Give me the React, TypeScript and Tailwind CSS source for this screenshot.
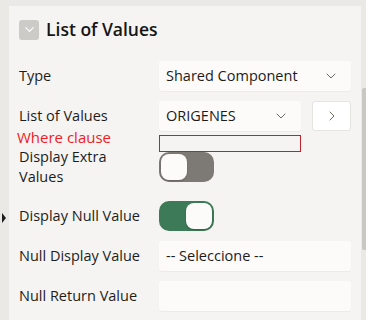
import { ChevronDown, ChevronRight } from 'lucide-react';

const font = { fontFamily: '"Open Sans", "Noto Sans", sans-serif' };

function Label({ children, className = '' }: { children: React.ReactNode; className?: string }) {
  return <div className={`w-[140px] shrink-0 text-[14.5px] leading-[20px] text-[#1d1c1b] ${className}`}>{children}</div>;
}

function Select({ value, className = '' }: { value: string; className?: string }) {
  return (
    <div className={`h-[30px] flex items-center justify-between pl-[7px] pr-[12px] rounded-[3px] bg-[#fcfbfa] shadow-[0_1px_1px_rgba(0,0,0,0.04)] ${className}`}>
      <span className="text-[14.5px] text-[#1d1c1b]">{value}</span>
      <ChevronDown size={16} strokeWidth={1.3} className="text-[#55524f]" />
    </div>
  );
}

function Toggle({ on }: { on: boolean }) {
  return (
    <div
      className={`w-[55px] h-[30px] rounded-[10px] p-[2px] flex ${on ? 'bg-[#3d7a57] justify-end' : 'bg-[#7d7975] justify-start'}`}
    >
      <div className="w-[26px] h-[26px] rounded-[8px] bg-[#fcfbfa] shadow-[0_1px_2px_rgba(0,0,0,0.2)]" />
    </div>
  );
}

export default function App() {
  return (
    <div className="w-[366px] h-[320px] overflow-hidden bg-[#ebe9e6] flex" style={font}>
      <div className="w-[9px] shrink-0 relative">
        <div className="absolute left-[2px] top-[213px] w-0 h-0 border-y-[5px] border-y-transparent border-l-[4px] border-l-[#1d1c1b]" />
      </div>
      <div className="w-[352px] shrink-0 mt-[6px] bg-[#f5f4f2] pl-[10px] pr-[10px]">
        <div className="flex items-center h-[46px] pt-[1px]">
          <div className="w-[20px] h-[20px] rounded-[3px] bg-[#cdcbc8] flex items-center justify-center">
            <ChevronDown size={15} strokeWidth={1.8} className="text-white" />
          </div>
          <span className="ml-[7px] text-[17.5px] font-semibold text-[#161513]">List of Values</span>
        </div>

        <div className="mt-[9px] flex items-center h-[30px]">
          <Label>Type</Label>
          <Select value="Shared Component" className="w-[192px]" />
        </div>

        <div className="mt-[10px] flex items-center h-[30px]">
          <Label>List of Values</Label>
          <Select value="ORIGENES" className="w-[142px]" />
          <div className="ml-[11px] w-[39px] h-[30px] rounded-[3px] bg-white border border-[#e6e4e1] flex items-center justify-center">
            <ChevronRight size={16} strokeWidth={1.3} className="text-[#55524f]" />
          </div>
        </div>

        <div className="flex items-start h-[17px] mt-[4px]">
          <div className="w-[140px] shrink-0 -ml-[2px] mr-[2px] -mt-[8px] h-[20px] text-[15px] leading-[20px] text-[#ee1c24]">Where clause</div>
          <div className="w-[142px] h-[17px] border border-[#c0242a]" />
        </div>

        <div className="flex items-start h-[30px]">
          <Label className="-mt-[5px]">Display Extra<br />Values</Label>
          <Toggle on={false} />
        </div>

        <div className="mt-[19px] flex items-center h-[30px]">
          <Label>Display Null Value</Label>
          <Toggle on />
        </div>

        <div className="mt-[10px] flex items-center h-[30px]">
          <Label>Null Display Value</Label>
          <div className="w-[192px] h-[30px] flex items-center pl-[7px] rounded-[3px] bg-[#fcfbfa] shadow-[0_1px_1px_rgba(0,0,0,0.04)] text-[14.5px] text-[#1d1c1b]">
            -- Seleccione --
          </div>
        </div>

        <div className="mt-[10px] flex items-center h-[30px]">
          <Label>Null Return Value</Label>
          <div className="w-[192px] h-[30px] rounded-[3px] bg-[#fcfbfa] shadow-[0_1px_1px_rgba(0,0,0,0.04)]" />
        </div>
      </div>
      <div className="flex-1 relative">
        <div className="absolute right-0 top-[88px] w-[4px] h-[162px] rounded-l-[2px] bg-[#c9c7c4]" />
      </div>
    </div>
  );
}
